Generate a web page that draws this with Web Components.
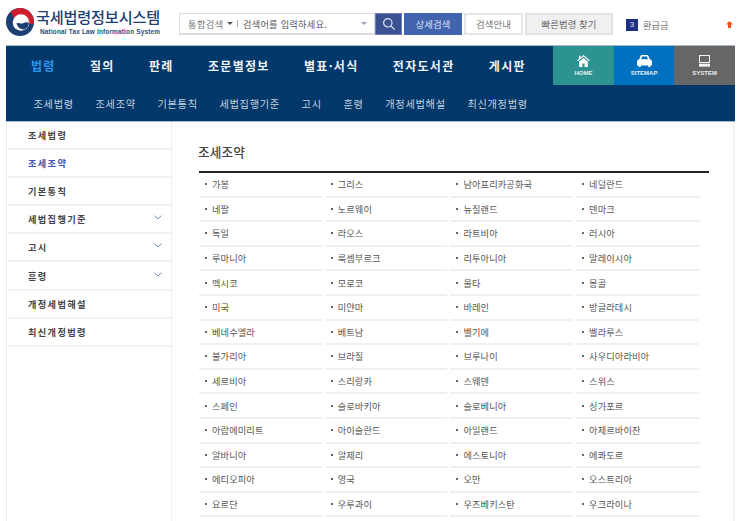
<!DOCTYPE html>
<html lang="ko">
<head>
<meta charset="utf-8">
<title>국세법령정보시스템</title>
<style>
  html, body { margin: 0; padding: 0; height: 521px; overflow: hidden; background: #fff; }
  body { font-family: "Noto Sans CJK KR", "Liberation Sans", sans-serif; color: #444; }
</style>
</head>
<body>
<tax-page>
  <tax-header slot="header"></tax-header>
  <tax-nav slot="nav"></tax-nav>
  <tax-sidebar slot="side">
    <side-item>조세법령</side-item>
    <side-item active>조세조약</side-item>
    <side-item>기본통칙</side-item>
    <side-item more>세법집행기준</side-item>
    <side-item more>고시</side-item>
    <side-item more>훈령</side-item>
    <side-item>개정세법해설</side-item>
    <side-item>최신개정법령</side-item>
  </tax-sidebar>
  <country-list slot="main" heading="조세조약">
    <country-item>가봉</country-item><country-item>그리스</country-item><country-item>남아프리카공화국</country-item><country-item>네덜란드</country-item>
    <country-item>네팔</country-item><country-item>노르웨이</country-item><country-item>뉴질랜드</country-item><country-item>덴마크</country-item>
    <country-item>독일</country-item><country-item>라오스</country-item><country-item>라트비아</country-item><country-item>러시아</country-item>
    <country-item>루마니아</country-item><country-item>룩셈부르크</country-item><country-item>리투아니아</country-item><country-item>말레이시아</country-item>
    <country-item>멕시코</country-item><country-item>모로코</country-item><country-item>몰타</country-item><country-item>몽골</country-item>
    <country-item>미국</country-item><country-item>미얀마</country-item><country-item>바레인</country-item><country-item>방글라데시</country-item>
    <country-item>베네수엘라</country-item><country-item>베트남</country-item><country-item>벨기에</country-item><country-item>벨라루스</country-item>
    <country-item>불가리아</country-item><country-item>브라질</country-item><country-item>브루나이</country-item><country-item>사우디아라비아</country-item>
    <country-item>세르비아</country-item><country-item>스리랑카</country-item><country-item>스웨덴</country-item><country-item>스위스</country-item>
    <country-item>스페인</country-item><country-item>슬로바키아</country-item><country-item>슬로베니아</country-item><country-item>싱가포르</country-item>
    <country-item>아랍에미리트</country-item><country-item>아이슬란드</country-item><country-item>아일랜드</country-item><country-item>아제르바이잔</country-item>
    <country-item>알바니아</country-item><country-item>알제리</country-item><country-item>에스토니아</country-item><country-item>에콰도르</country-item>
    <country-item>에티오피아</country-item><country-item>영국</country-item><country-item>오만</country-item><country-item>오스트리아</country-item>
    <country-item>요르단</country-item><country-item>우루과이</country-item><country-item>우즈베키스탄</country-item><country-item>우크라이나</country-item>
  </country-list>
</tax-page>

<script>
// page frame
class TaxPage extends HTMLElement {
  constructor() {
    super();
    this.attachShadow({mode: 'open'});
    this.shadowRoot.innerHTML = `
      <style>
        :host { display: block; width: 743px; }
        .frame { margin: 0 8px 0 6px; width: 729px; }
        .body { display: flex; border-right: 2px solid #f2f2f2; border-left: 1px solid #eee; box-sizing: border-box; }
      </style>
      <slot name="header"></slot>
      <div class="frame">
        <slot name="nav"></slot>
        <div class="body">
          <slot name="side"></slot>
          <slot name="main"></slot>
        </div>
      </div>`;
  }
}
customElements.define("tax-page", TaxPage);

// logo, search and quick buttons
class TaxHeader extends HTMLElement {
  constructor() {
    super();
    this.attachShadow({mode: 'open'});
    this.shadowRoot.innerHTML = `
      <style>
        :host { display: block; height: 45px; }
        * { box-sizing: border-box; }
        .bar { display: flex; align-items: flex-start; height: 45px; padding-left: 6px; }
        .logo { display: flex; width: 173px; padding-top: 8px; }
        .logo svg { width: 28px; height: 28px; flex: none; }
        .names { margin-left: 2px; }
        .ko { font-size: 15.2px; line-height: 17px; font-weight: 500; color: #1c3f72; letter-spacing: -0.2px; white-space: nowrap; }
        .en { font-size: 6.4px; line-height: 9px; font-weight: 700; color: #2c4a76; margin: 2px 0 0 4px; font-family: "Liberation Sans", sans-serif; letter-spacing: 0.2px; white-space: nowrap; }
        .search { display: flex; align-items: center; width: 196px; height: 22px; margin-top: 13px; border: 1px solid #ddd; border-bottom-width: 2px; font-size: 9.2px; white-space: nowrap; }
        .scope { margin-left: 8px; width: 47px; color: #777; letter-spacing: .45px; display: flex; align-items: center; }
        .tri { width: 0; height: 0; border: 3px solid transparent; border-top: 3px solid #555; border-bottom: 0; margin-left: 3px; }
        .sep { width: 1px; height: 7px; background: #aaa; margin: 0 5px 0 2px; }
        .q { flex: 1; color: #555; letter-spacing: .25px; }
        .drop { border-top-color: #9aa6b5; margin-right: 7px; }
        .go { width: 27px; height: 22px; margin-top: 13px; background: #3c5192; border: 1px solid #6f80b0; display: flex; align-items: center; justify-content: center; }
        .btn { height: 22px; margin-top: 13px; font-size: 9.4px; display: flex; align-items: center; justify-content: center; letter-spacing: .1px; }
        .detail { width: 58px; margin-left: 2px; background: #4263ad; color: #d8e2f3; }
        .guide { width: 59px; margin-left: 2px; border: 2px solid #e6e6e6; background: #fff; color: #777; }
        .fast { width: 88px; margin-left: 2px; border: 2px solid #e2e2e2; background: #f0f0f0; color: #666; }
        .refund { display: flex; align-items: center; margin: 18px 0 0 13px; font-size: 9.2px; color: #777; letter-spacing: .1px; }
        .refund b { display: block; width: 12px; height: 12px; line-height: 12px; text-align: center; background: #1f2f86; color: #dfe4f5; font-size: 8px; font-weight: 400; margin-right: 5px; font-family: "Liberation Sans", sans-serif; }
        .up { margin: 21px 0 0 57px; }
      </style>
      <div class="bar">
        <div class="logo">
          <svg viewBox="0 0 28 28">
            <circle cx="14" cy="14" r="14" fill="#1c3f72"/>
            <path d="M4.500 3.700A14 14 0 0 1 27.900 15.500L20 16L8 10Z" fill="#cf1f2e"/>
            <circle cx="15" cy="14.500" r="8.300" fill="#fff"/>
            <path d="M10.500 15.500C12.500 14.300 14 16 16 15.500C18 15 19.500 13.500 22.800 14.500C23 17.500 21.800 19.500 19.800 20.800C16.500 22.500 12 20.500 10.500 15.500Z" fill="#1c3f72"/>
          </svg>
          <div class="names">
            <div class="ko">국세법령정보시스템</div>
            <div class="en">National Tax Law Information System</div>
          </div>
        </div>
        <div class="search">
          <span class="scope">통합검색<i class="tri"></i></span><i class="sep"></i>
          <span class="q">검색어를 입력하세요.</span><i class="tri drop"></i>
        </div>
        <div class="go">
          <svg width="14" height="14" viewBox="0 0 14 14" fill="none" stroke="#dfe5f3" stroke-width="1.2"><circle cx="5.8" cy="5.8" r="4.2"/><path d="M8.9 8.9L12.6 12.6"/></svg>
        </div>
        <div class="btn detail">상세검색</div>
        <div class="btn guide">검색안내</div>
        <div class="btn fast">빠른법령 찾기</div>
        <div class="refund"><b>3</b>환급금</div>
        <svg class="up" width="7" height="7" viewBox="0 0 7 7"><path d="M3.5 0L7 3.6H5V7H2V3.6H0Z" fill="#f0521c"/></svg>
      </div>`;
  }
}
customElements.define("tax-header", TaxHeader);

// blue navigation with tiles
class TaxNav extends HTMLElement {
  constructor() {
    super();
    this.attachShadow({mode: 'open'});
    this.shadowRoot.innerHTML = `
      <style>
        :host { display: block; height: 77px; background: #03386b; border-top: 1px solid #a8bac9; border-bottom: 1px solid #a8bac9; box-sizing: border-box; }
        .top { display: flex; height: 39px; }
        .main { flex: 1; display: flex; gap: 34.3px; padding-left: 25px; align-items: center; font-size: 12px; font-weight: 700; color: #eef3f8; letter-spacing: 1.3px; white-space: nowrap; }
        .main .on { color: #2a96ee; }
        .tile { width: 60.6px; display: flex; flex-direction: column; align-items: center; padding-top: 9px; box-sizing: border-box; color: #e8eef0; font: 700 6px "Liberation Sans", sans-serif; }
        .tile svg { height: 12px; margin-bottom: 3px; display: block; }
        .home { background: #2d9390; }
        .map { background: #0070c0; }
        .sys { background: #666; }
        .sub { display: flex; gap: 21.7px; height: 36px; padding-left: 27.5px; align-items: center; font-size: 10.2px; color: #c3d0de; letter-spacing: .7px; white-space: nowrap; }
      </style>
      <div class="top">
        <div class="main">
          <span class="on">법령</span><span>질의</span><span>판례</span><span>조문별정보</span><span>별표·서식</span><span>전자도서관</span><span>게시판</span>
        </div>
        <div class="tile home">
          <svg width="13" height="12" viewBox="0 0 13 12" fill="#fff"><path d="M6.5 0L13 5.4L12.2 6.3L6.5 1.6L.8 6.3L0 5.4L2 3.7V.8H3.6V2.4Z"/><path d="M2.2 6.6L6.5 3L10.8 6.6V12H7.6V8.6H5.4V12H2.2Z"/></svg>
          HOME
        </div>
        <div class="tile map">
          <svg width="15" height="12" viewBox="0 0 15 12" fill="#fff"><path d="M3.4 1.2C3.7.4 4.3 0 5 0H10C10.700 0 11.300 .4 11.600 1.200L12.800 4.300C14 4.600 15 5.500 15 6.800V10.500H13.400V12H11.200V10.500H3.800V12H1.600V10.500H0V6.800C0 5.500 1 4.600 2.200 4.300ZM4.100 4.200H10.900L10 1.500H5Z" fill-rule="evenodd"/></svg>
          SITEMAP
        </div>
        <div class="tile sys">
          <svg width="11" height="12" viewBox="0 0 11 12" fill="none" stroke="#f2f2f2"><rect x=".5" y=".5" width="10" height="7"/><path d="M0 10.200H11" stroke-width="3"/></svg>
          SYSTEM
        </div>
      </div>
      <div class="sub">
        <span>조세법령</span><span>조세조약</span><span>기본통칙</span><span>세법집행기준</span><span>고시</span><span>훈령</span><span>개정세법해설</span><span>최신개정법령</span>
      </div>`;
  }
}
customElements.define("tax-nav", TaxNav);

class TaxSidebar extends HTMLElement {
  constructor() {
    super();
    this.attachShadow({mode: 'open'});
    this.shadowRoot.innerHTML = `
      <style>
        :host { display: block; width: 165px; height: 400px; flex: none; border-right: 1px solid #eee; box-sizing: border-box; }
      </style>
      <slot></slot>`;
  }
}
customElements.define("tax-sidebar", TaxSidebar);

let sideItemTemplate = document.createElement("template");
sideItemTemplate.innerHTML = `
  <style>
    :host { display: flex; align-items: center; justify-content: space-between; height: 28.1px; box-sizing: border-box; padding: 0 9px 0 21px; border-bottom: 2px solid #f2f2f2; font-size: 9.2px; font-weight: 700; color: #444; letter-spacing: 1.35px; white-space: nowrap; }
    :host([active]) { color: #3f51b5; }
    svg { display: none; margin-top: -3px; }
    :host([more]) svg { display: block; }
  </style>
  <span><slot></slot></span>
  <svg width="8" height="5" viewBox="0 0 8 5" fill="none" stroke="#6f8fb8" stroke-width="1"><path d="M.5 .7L4 4L7.500 .7"/></svg>`;

class SideItem extends HTMLElement {
  constructor() {
    super();
    this.attachShadow({mode: 'open'});
    this.shadowRoot.appendChild(sideItemTemplate.content.cloneNode(true));
  }
}
customElements.define("side-item", SideItem);

class CountryList extends HTMLElement {
  constructor() {
    super();
    this.attachShadow({mode: 'open'});
    this.shadowRoot.innerHTML = `
      <style>
        :host { display: block; flex: 1; padding: 0 24px 0 27px; }
        h2 { margin: 0; height: 51px; padding-top: 20px; box-sizing: border-box; border-bottom: 2px solid #222; font-size: 12.6px; line-height: 19px; font-weight: 500; color: #444; letter-spacing: .2px; }
        h2 span { margin-left: -1px; }
        .grid { display: grid; grid-template-columns: repeat(4, 122.6px); column-gap: 3.1px; }
      </style>
      <h2><span></span></h2>
      <div class="grid"><slot></slot></div>`;
    this.shadowRoot.querySelector("h2 span").innerText = this.getAttribute("heading");
  }
}
customElements.define("country-list", CountryList);

let countryItemTemplate = document.createElement("template");
countryItemTemplate.innerHTML = `
  <style>
    :host { display: flex; align-items: center; height: 24.6px; box-sizing: border-box; padding: 0 0 0 6px; border-bottom: 2px solid #f0f0f0; font-size: 9.2px; color: #555; letter-spacing: .14px; white-space: nowrap; }
    i { width: 2px; height: 2px; background: #666; margin-right: 5px; flex: none; }
  </style>
  <i></i><slot></slot>`;

class CountryItem extends HTMLElement {
  constructor() {
    super();
    this.attachShadow({mode: 'open'});
    this.shadowRoot.appendChild(countryItemTemplate.content.cloneNode(true));
  }
}
customElements.define("country-item", CountryItem);
</script>
</body>
</html>
